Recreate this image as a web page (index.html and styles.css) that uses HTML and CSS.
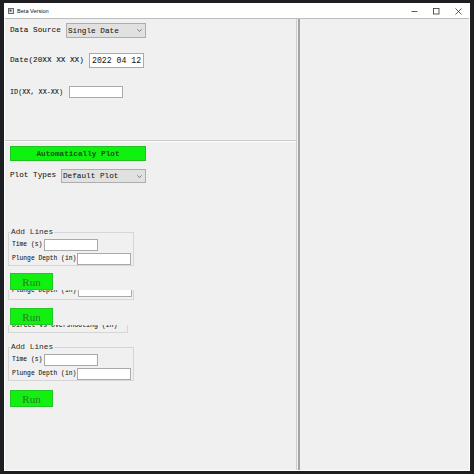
FILE: index.html
```html
<!DOCTYPE html>
<html lang="en">
<head>
  <meta charset="UTF-8">
  <title>Beta Version</title>
  <link rel="stylesheet" href="styles.css">
</head>
<body>
  <div class="window">
    <div class="titlebar">
      <svg class="app-icon" viewBox="0 0 6 6" width="6" height="6">
        <rect x="0.5" y="0.5" width="5" height="5" fill="#e4e4e4" stroke="#6b6b6b" stroke-width="1"/>
        <rect x="1.5" y="1.5" width="2" height="2" fill="#3a4a63"/>
      </svg>
      <span class="title">Beta Version</span>
      <div class="win-controls">
        <span class="win-btn">
          <svg viewBox="0 0 7 7" width="7" height="7"><line x1="0.5" y1="3.5" x2="6.5" y2="3.5" stroke="#333" stroke-width="0.8"/></svg>
        </span>
        <span class="win-btn">
          <svg viewBox="0 0 7 7" width="7" height="7"><rect x="0.5" y="0.5" width="5.5" height="5.5" fill="none" stroke="#333" stroke-width="0.8"/></svg>
        </span>
        <span class="win-btn">
          <svg viewBox="0 0 7 7" width="7" height="7"><path d="M0.5 0.5 L6.5 6.5 M6.5 0.5 L0.5 6.5" stroke="#333" stroke-width="0.8"/></svg>
        </span>
      </div>
    </div>

    <div class="client">
      <div class="left-panel">
        <div class="row row-source">
          <span class="lbl lbl-source">Data Source</span>
          <div class="combo combo-source">
            <span>Single Date</span>
            <svg class="chevron" viewBox="0 0 5 3" width="5" height="3"><polyline points="0.3,0.3 2.5,2.5 4.7,0.3" fill="none" stroke="#555" stroke-width="0.7"/></svg>
          </div>
        </div>

        <div class="row row-date">
          <span class="lbl lbl-date">Date(20XX XX XX)</span>
          <input class="entry entry-date" type="text" value="2022 04 12">
        </div>

        <div class="row row-id">
          <span class="lbl lbl-small lbl-id">ID(XX, XX-XX)</span>
          <input class="entry entry-id" type="text" value="">
        </div>

        <div class="sep"></div>

        <button class="btn-auto" type="button">Automatically Plot</button>

        <div class="row row-plot">
          <span class="lbl lbl-plot">Plot Types</span>
          <div class="combo combo-plot">
            <span>Default Plot</span>
            <svg class="chevron" viewBox="0 0 5 3" width="5" height="3"><polyline points="0.3,0.3 2.5,2.5 4.7,0.3" fill="none" stroke="#555" stroke-width="0.7"/></svg>
          </div>
        </div>

        <div class="frame frame-first">
          <span class="frame-title">Add Lines</span>
          <div class="frame-row">
            <span class="lbl-tiny lbl-time">Time (s)</span>
            <input class="entry entry-small" type="text" value="">
          </div>
          <div class="frame-row">
            <span class="lbl-tiny lbl-depth">Plunge Depth (in)</span>
            <input class="entry entry-small" type="text" value="">
          </div>
        </div>

        <button class="btn-run run-first" type="button">Run</button>

        <div class="clip clip-depth">
          <div class="frame-row clip-row">
            <span class="lbl-tiny lbl-depth">Plunge Depth (in)</span>
            <input class="entry entry-small" type="text" value="">
          </div>
        </div>

        <button class="btn-run run-second" type="button">Run</button>

        <div class="clip clip-offset">
          <div class="frame-row clip-row">
            <span class="lbl-tiny">Direct vs Overshooting (in)</span>
          </div>
        </div>

        <div class="frame frame-second">
          <span class="frame-title">Add Lines</span>
          <div class="frame-row">
            <span class="lbl-tiny lbl-time">Time (s)</span>
            <input class="entry entry-small" type="text" value="">
          </div>
          <div class="frame-row">
            <span class="lbl-tiny lbl-depth">Plunge Depth (in)</span>
            <input class="entry entry-small" type="text" value="">
          </div>
        </div>

        <button class="btn-run run-third" type="button">Run</button>
      </div>

      <div class="sash"></div>
      <div class="right-panel"></div>
    </div>
  </div>
</body>
</html>
```

FILE: styles.css
```css
/* Finestra Tk "Beta Version" sopra il desktop scuro */

html, body {
  height: 100%;
  overflow: hidden;
}

body {
  margin: 0;
  padding: 3px 4px 3px 4px;
  box-sizing: border-box;
  background: #1e1f22;
  font-family: "Liberation Mono", "DejaVu Sans Mono", monospace;
  color: #111;
}

/* --- Finestra --- */
.window {
  width: 466px;
  height: 468px;
  box-sizing: border-box;
  border: 1px solid #ffffff;
  background: #ffffff;
  display: flex;
  flex-direction: column;
}

.titlebar {
  height: 14px;
  display: flex;
  align-items: center;
  padding-left: 3px;
  background: #ffffff;
}

.app-icon {
  display: block;
  margin-right: 3px;
}

.title {
  font-family: "Liberation Sans", Arial, sans-serif;
  font-size: 5.6px;
  color: #111;
}

.win-controls {
  margin-left: auto;
  display: flex;
  height: 100%;
}

.win-btn {
  width: 22px;
  display: flex;
  align-items: center;
  justify-content: center;
}

.win-btn svg { display: block; }

.client {
  flex: 1;
  display: flex;
  border-top: 1px solid #bdbdbd;
  background: #f0f0f0;
}

.left-panel {
  width: 292px;
  border-right: 1px solid #cfcfcf;
  padding-left: 5px;
  box-sizing: border-box;
}

.sash {
  width: 2px;
  margin-left: 1px;
  background: #a4a4a4;
}

.right-panel {
  flex: 1;
  background: #f0f0f0;
}

/* --- Righe e etichette --- */
.row {
  display: flex;
  align-items: center;
}

.lbl {
  font-size: 7.7px;
  line-height: 1;
  white-space: nowrap;
  -webkit-text-stroke: 0.07px #333;
}

.lbl-small { font-size: 6.8px; }

.lbl-tiny {
  font-size: 6.3px;
  line-height: 1;
  white-space: nowrap;
  -webkit-text-stroke: 0.07px #333;
}

.row-source { margin-top: 4px; height: 15px; }
.row-date { margin-top: 15px; height: 15px; }
.row-id { margin-top: 18px; height: 12px; }
.row-plot { margin-top: 8px; height: 14px; }

.lbl-source { width: 56px; }
.lbl-date { width: 79px; }
.lbl-id { width: 59px; }
.lbl-plot { width: 51px; }

/* --- Combobox --- */
.combo {
  height: 100%;
  box-sizing: border-box;
  display: flex;
  align-items: center;
  justify-content: space-between;
  border: 1px solid #adadad;
  background: #e1e1e1;
  padding: 0 3px 0 1px;
  font-size: 7.7px;
  white-space: nowrap;
  -webkit-text-stroke: 0.05px #333;
}

.combo-source { width: 80px; }
.combo-plot { width: 85px; }

.chevron { display: block; }

/* --- Entry --- */
.entry {
  box-sizing: border-box;
  height: 100%;
  margin: 0;
  padding: 0 2px;
  border: 1px solid #a9a9a9;
  background: #ffffff;
  font-family: inherit;
  font-size: 8.2px;
  color: #111;
  outline: none;
}

.entry-date { width: 55px; }
.entry-id { width: 54px; }
.entry-small { width: 54px; }

/* --- Separatore --- */
.sep {
  margin: 42px 0 0 -5px;
  border-top: 1px solid #c9c9c9;
  border-bottom: 1px solid #fbfbfb;
}

/* --- Bottoni verdi --- */
.btn-auto {
  display: block;
  margin-top: 4px;
  width: 136px;
  height: 15px;
  padding: 0;
  box-sizing: border-box;
  background: #0ff20f;
  border: 1px solid #1fc21f;
  font-family: inherit;
  font-size: 7.7px;
  font-weight: bold;
  color: #1b531b;
}

.btn-run {
  display: block;
  width: 43px;
  height: 17px;
  padding: 0;
  box-sizing: border-box;
  background: #12f012;
  border: 1px solid #22c822;
  font-family: "Liberation Serif", "Times New Roman", serif;
  font-size: 11px;
  color: #2b7a2b;
}

.run-first { margin-top: 7px; }
.run-second { margin-top: 8px; }
.run-third { margin-top: 9px; }

/* --- LabelFrame "Add Lines" --- */
.frame {
  margin-left: -2px;
  width: 126px;
  box-sizing: border-box;
  border: 1px solid #d6d6d6;
  padding: 0 2px 0 3px;
}

.frame-first { margin-top: 49px; }
.frame-second { margin-top: 14px; }

.frame-title {
  display: block;
  width: max-content;
  margin: -5px 0 0 -2px;
  padding: 0 1px;
  background: #f0f0f0;
  font-size: 7.8px;
  line-height: 9px;
  color: #2a2a2a;
}

.frame-row {
  display: flex;
  align-items: center;
  height: 12px;
  margin-top: 2px;
}

.lbl-time { width: 32px; }
.lbl-depth { width: 66px; }

/* righe tagliate dalla sovrapposizione della griglia */
.clip {
  margin-left: -2px;
  box-sizing: border-box;
  border: 1px solid #d6d6d6;
  border-top: none;
  padding-left: 3px;
  overflow: hidden;
}

.clip-depth { width: 126px; height: 10px; }
.clip-offset { width: 120px; height: 8px; }

.clip-row { margin-top: -5px; }
.clip-offset .lbl-tiny { font-size: 6.5px; }
```
